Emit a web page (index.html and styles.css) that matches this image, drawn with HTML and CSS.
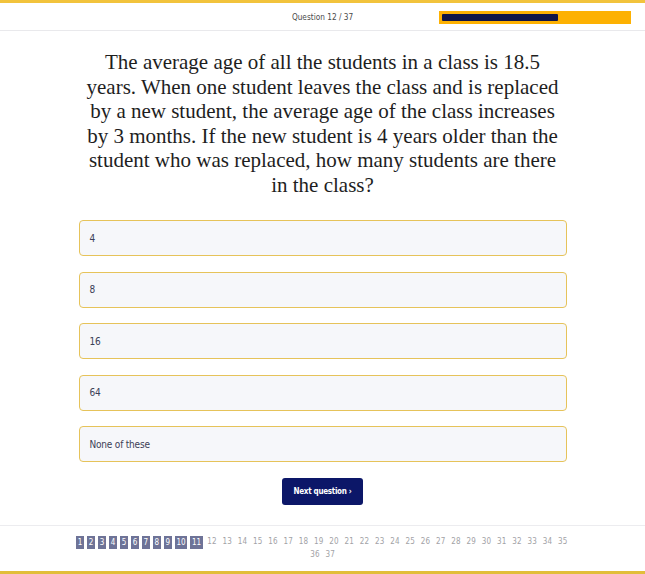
FILE: index.html
```html
<!DOCTYPE html>
<html lang="en">
<head>
<meta charset="utf-8">
<title>Quiz</title>
<link rel="stylesheet" href="styles.css">
</head>
<body>
<div class="page">
  <header class="topbar">
    <div class="spacer"></div>
    <div class="counter">Question 12 / 37</div>
    <div class="progress"><div class="progress-fill" style="width:62.4%"></div></div>
  </header>
  <main class="quiz">
    <h1 class="question">The average age of all the students in a class is 18.5 years. When one student leaves the class and is replaced by a new student, the average age of the class increases by 3 months. If the new student is 4 years older than the student who was replaced, how many students are there in the class?</h1>
    <div class="options">
      <div class="option">4</div>
      <div class="option">8</div>
      <div class="option">16</div>
      <div class="option">64</div>
      <div class="option">None of these</div>
    </div>
    <button class="next">Next question ›</button>
  </main>
  <footer class="pager">
    <div class="pages">
      <span class="pg done">1</span><span class="pg done">2</span><span class="pg done">3</span><span class="pg done">4</span><span class="pg done">5</span><span class="pg done">6</span><span class="pg done">7</span><span class="pg done">8</span><span class="pg done">9</span><span class="pg done">10</span><span class="pg done">11</span><span class="pg">12</span><span class="pg">13</span><span class="pg">14</span><span class="pg">15</span><span class="pg">16</span><span class="pg">17</span><span class="pg">18</span><span class="pg">19</span><span class="pg">20</span><span class="pg">21</span><span class="pg">22</span><span class="pg">23</span><span class="pg">24</span><span class="pg">25</span><span class="pg">26</span><span class="pg">27</span><span class="pg">28</span><span class="pg">29</span><span class="pg">30</span><span class="pg">31</span><span class="pg">32</span><span class="pg">33</span><span class="pg">34</span><span class="pg">35</span><span class="pg">36</span><span class="pg">37</span>
    </div>
  </footer>
</div>
</body>
</html>
```

FILE: styles.css
```css
* { box-sizing: border-box; }

html, body {
  margin: 0;
  padding: 0;
  background: #ffffff;
}

body {
  font-family: "DejaVu Sans Condensed", "Liberation Sans", sans-serif;
  color: #333;
}

.page {
  border-top: 3px solid #f2c33c;
  display: flex;
  flex-direction: column;
  height: 574px;
}

.topbar {
  height: 28px;
  border-bottom: 1px solid #e9e9ec;
  display: grid;
  grid-template-columns: 1fr auto 1fr;
  align-items: center;
}

.counter {
  font-size: 8.2px;
  color: #4a4a4a;
  padding-top: 1px;
}

.progress {
  justify-self: end;
  margin-right: 14px;
  margin-top: 2px;
  width: 192px;
  height: 13px;
  padding: 3px;
  background: #fdb102;
}

.progress-fill {
  height: 100%;
  background: #101547;
  border-radius: 1px;
}

.quiz {
  padding-top: 19px;
  display: flex;
  flex-direction: column;
  align-items: center;
}

.question {
  margin: 0;
  width: 482px;
  font-family: "Liberation Serif", "DejaVu Serif", serif;
  font-weight: normal;
  font-size: 21px;
  line-height: 24.5px;
  color: #1e1e1e;
  text-align: center;
}

.options {
  margin-top: 23px;
  width: 488px;
  display: flex;
  flex-direction: column;
  gap: 15.5px;
}

.option {
  height: 36px;
  border: 1.5px solid #e6c35a;
  border-radius: 4px;
  background: #f6f7fa;
  padding-left: 10px;
  display: flex;
  align-items: center;
  font-size: 10px;
  letter-spacing: -0.2px;
  color: #3b4056;
}

.next {
  margin-top: 15.5px;
  width: 81px;
  height: 27px;
  border: 0;
  border-radius: 3px;
  background: #0c1768;
  color: #ffffff;
  font-family: inherit;
  font-weight: bold;
  font-size: 8px;
  letter-spacing: -0.3px;
  padding: 0;
}

.pager {
  margin-top: 20.5px;
  border-top: 1px solid #ececef;
  border-bottom: 3px solid #e2be3a;
  padding: 10px 0 9px;
  display: flex;
  justify-content: center;
}

.pages {
  width: 505px;
  display: flex;
  flex-wrap: wrap;
  justify-content: center;
}

.pg {
  height: 13px;
  line-height: 11px;
  font-size: 8px;
  color: #a2a2a6;
  padding: 0 3.05px;
}

.pg.done {
  background: #6e7397;
  color: #ffffff;
  line-height: 13px;
  padding: 0 1.9px;
  margin: 0 1.3px;
}
```
